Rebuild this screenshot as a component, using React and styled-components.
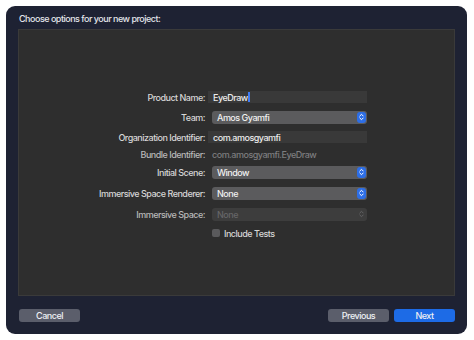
import React from "react";
import styled, { createGlobalStyle } from "styled-components";

const Global = createGlobalStyle`
  html, body { margin: 0; padding: 0; background: #ffffff; }
  body { font-family: "Inter", "Liberation Sans", sans-serif; font-weight: 500; letter-spacing: -0.5px; -webkit-font-smoothing: antialiased; }
`;

const Page = styled.div`
  width: 474px;
  height: 340px;
  padding: 6px 7px 6px 6px;
  box-sizing: border-box;
`;

const Sheet = styled.div`
  width: 461px;
  height: 328px;
  box-sizing: border-box;
  background: #1e2233;
  border-radius: 9px;
  padding: 0 12px;
  display: flex;
  flex-direction: column;
`;

const Title = styled.div`
  height: 22px;
  display: flex;
  align-items: center;
  padding-left: 1px;
  padding-top: 1px;
  font-size: 9px;
  color: #e4e6ea;
`;

const Content = styled.div`
  height: 267px;
  box-sizing: border-box;
  background: #2e2e2e;
  border: 1px solid #3a3a3a;
  padding-top: 61px;
  display: flex;
  flex-direction: column;
`;

const Row = styled.div`
  display: flex;
  align-items: center;
  height: ${(p) => p.$h || 12}px;
  margin-top: ${(p) => p.$mt || 0}px;
`;

const Label = styled.div`
  width: 186px;
  text-align: right;
  font-size: 9px;
  color: ${(p) => (p.$dim ? "#b8b8b8" : "#d6d6d6")};
  white-space: nowrap;
`;

const TextField = styled.div`
  margin-left: 3px;
  width: 159px;
  height: 12px;
  box-sizing: border-box;
  background: #393939;
  padding-left: 5px;
  display: flex;
  align-items: center;
  font-size: 9px;
  color: #ececec;
`;

const Caret = styled.span`
  display: inline-block;
  width: 1.5px;
  height: 10px;
  background: #3f7cf5;
  margin-left: 0.5px;
`;

const StaticValue = styled.div`
  margin-left: 3px;
  padding-left: 4px;
  font-size: 9px;
  color: #7d7d7f;
`;

const Select = styled.div`
  margin-left: 7px;
  width: 155px;
  height: 13px;
  box-sizing: border-box;
  background: ${(p) => (p.$disabled ? "#3d3d3d" : "#5b5b5d")};
  border-radius: 3px;
  padding-left: 5px;
  display: flex;
  align-items: center;
  justify-content: space-between;
  font-size: 9px;
  color: ${(p) => (p.$disabled ? "#666668" : "#f0f0f0")};
`;

const Stepper = styled.div`
  width: 9px;
  height: 11px;
  margin-right: 1px;
  border-radius: 3px;
  background: ${(p) => (p.$disabled ? "transparent" : "#2d6ee6")};
  display: flex;
  align-items: center;
  justify-content: center;
`;

const CheckRow = styled.div`
  margin-left: 193px;
  display: flex;
  align-items: center;
  gap: 4px;
  font-size: 9px;
  color: #d6d6d6;
`;

const Box = styled.div`
  width: 8px;
  height: 8px;
  border-radius: 2px;
  background: #5a5a5c;
`;

const Footer = styled.div`
  margin-top: 13px;
  display: flex;
  justify-content: space-between;
  padding-left: 1px;
`;

const Group = styled.div`
  display: flex;
  gap: 5px;
`;

const Button = styled.div`
  width: 61px;
  height: 13px;
  border-radius: 3px;
  background: ${(p) => (p.$primary ? "#1d6be6" : "#5b5e6b")};
  color: #eef0f4;
  font-size: 9px;
  display: flex;
  align-items: center;
  justify-content: center;
`;

const Chevrons = ({ color }) => (
  <svg width="5" height="8" viewBox="0 0 5 8">
    <path d="M0.8 3 L2.5 1.3 L4.2 3 M0.8 5 L2.5 6.7 L4.2 5" fill="none" stroke={color} strokeWidth="1" strokeLinecap="round" strokeLinejoin="round" />
  </svg>
);

const PopUp = ({ value, disabled }) => (
  <Select $disabled={disabled}>
    <span>{value}</span>
    <Stepper $disabled={disabled}>
      <Chevrons color={disabled ? "#626264" : "#ffffff"} />
    </Stepper>
  </Select>
);

export default function App() {
  return (
    <Page>
      <Global />
      <Sheet>
        <Title>Choose options for your new project:</Title>
        <Content>
          <Row>
            <Label>Product Name:</Label>
            <TextField>
              EyeDraw<Caret />
            </TextField>
          </Row>
          <Row $mt={8}>
            <Label>Team:</Label>
            <PopUp value="Amos Gyamfi" />
          </Row>
          <Row $mt={8}>
            <Label>Organization Identifier:</Label>
            <TextField>com.amosgyamfi</TextField>
          </Row>
          <Row $mt={6} $h={11}>
            <Label $dim>Bundle Identifier:</Label>
            <StaticValue>com.amosgyamfi.EyeDraw</StaticValue>
          </Row>
          <Row $mt={6}>
            <Label>Initial Scene:</Label>
            <PopUp value="Window" />
          </Row>
          <Row $mt={9}>
            <Label>Immersive Space Renderer:</Label>
            <PopUp value="None" />
          </Row>
          <Row $mt={9}>
            <Label $dim>Immersive Space:</Label>
            <PopUp value="None" disabled />
          </Row>
          <Row $mt={7}>
            <CheckRow>
              <Box />
              Include Tests
            </CheckRow>
          </Row>
        </Content>
        <Footer>
          <Button>Cancel</Button>
          <Group>
            <Button>Previous</Button>
            <Button $primary>Next</Button>
          </Group>
        </Footer>
      </Sheet>
    </Page>
  );
}
